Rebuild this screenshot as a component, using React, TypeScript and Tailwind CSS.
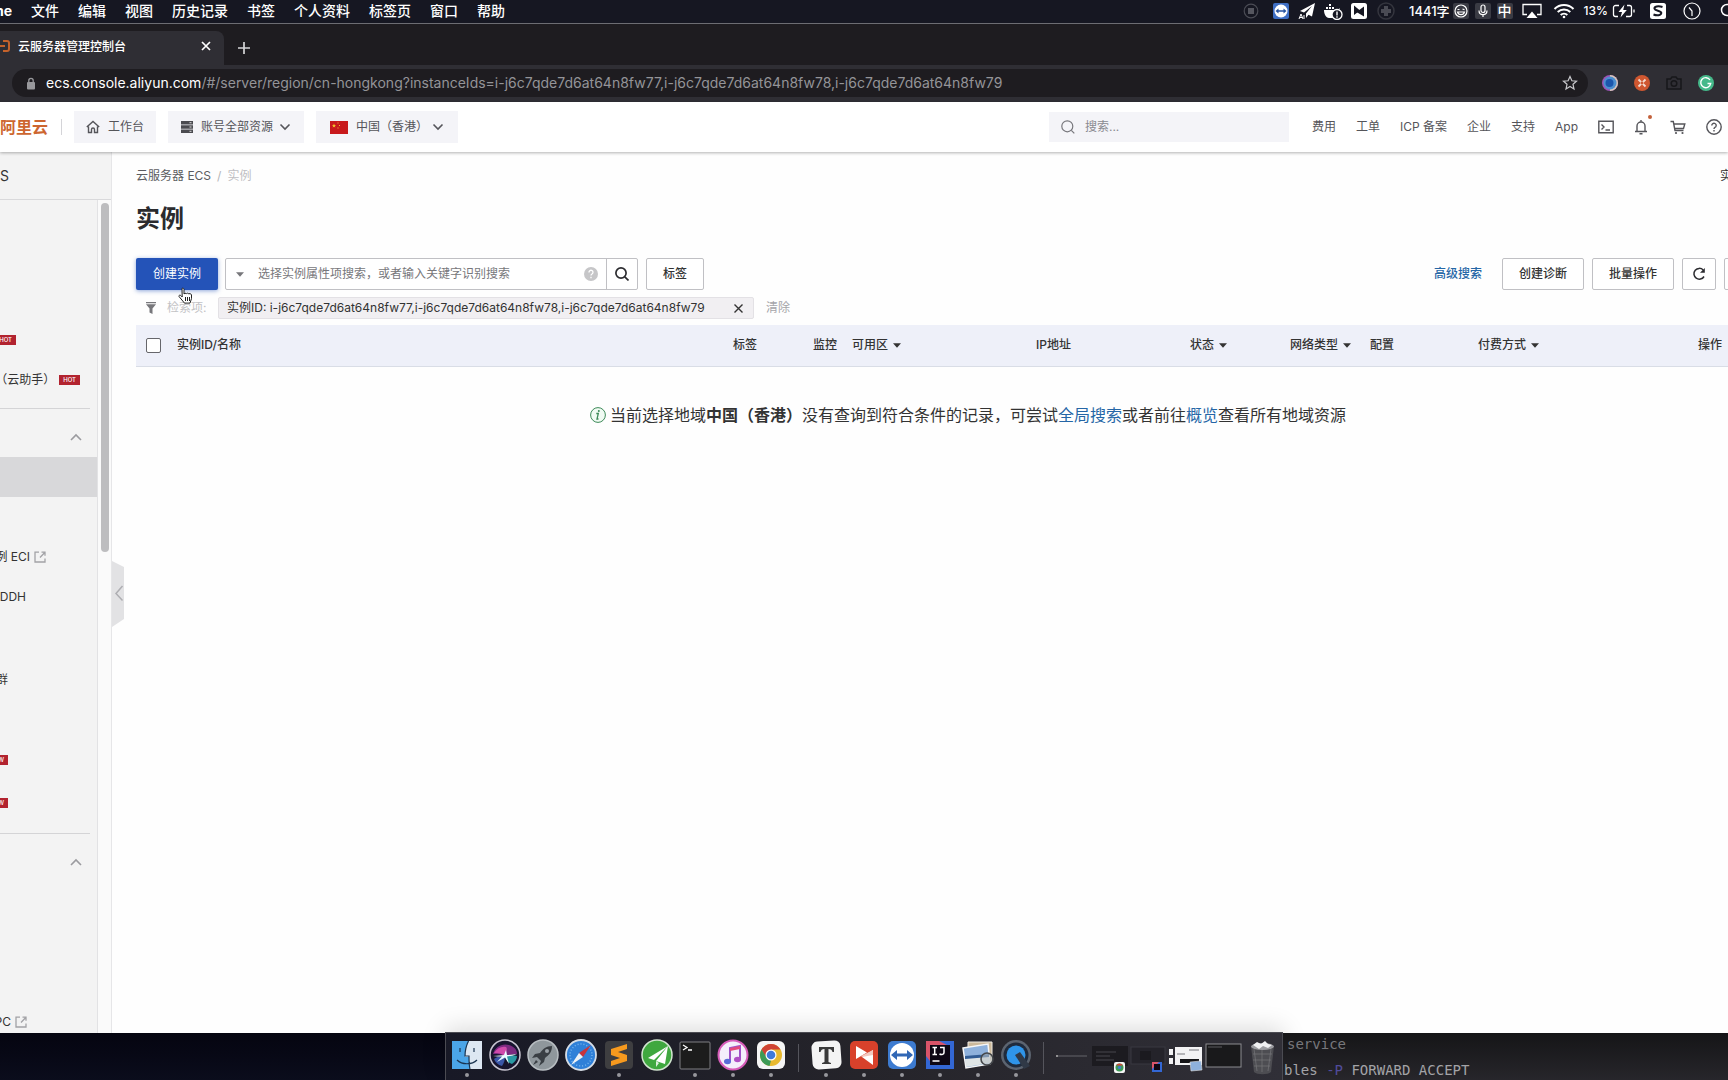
import type { ReactNode } from 'react';

const cjk = "font-['Inter','Noto_Sans_CJK_SC',sans-serif]";

const menus = ['文件', '编辑', '视图', '历史记录', '书签', '个人资料', '标签页', '窗口', '帮助'];

function Caret({ className = '' }: { className?: string }) {
  return (
    <svg viewBox="0 0 8 5" className={`h-[5px] w-2 ${className}`} fill="currentColor" aria-hidden="true">
      <path d="M0 .3h8L4 4.7z" />
    </svg>
  );
}

function Chevron({ up = false, className = '' }: { up?: boolean; className?: string }) {
  return (
    <svg viewBox="0 0 12 8" className={className} fill="none" stroke="currentColor" strokeWidth="1.6" aria-hidden="true">
      <path d={up ? 'M1 7l5-5 5 5' : 'M1.5 1.5l4.500 4.500 4.500-4.500'} />
    </svg>
  );
}

function Cell({ w, children }: { w: string; children: ReactNode }) {
  return <span className={`flex h-5 shrink-0 items-center justify-center ${w}`}>{children}</span>;
}

function MenuBar() {
  return (
    <div className="flex h-6 shrink-0 items-center overflow-hidden border-b border-[#6d6d73] bg-[#161722] pb-0.5 text-sm leading-5 font-medium text-white">
      <div className="flex w-3 justify-end overflow-hidden font-bold">me</div>
      <nav className="ml-[19px] flex gap-[19px]" aria-label="菜单栏">
        {menus.map((m) => (
          <button key={m} className="whitespace-nowrap">{m}</button>
        ))}
      </nav>
      <div className="ml-auto flex items-center">
        <Cell w="w-7">
          <svg viewBox="0 0 16 16" className="size-4" aria-hidden="true">
            <circle cx="8" cy="8" r="6.800" fill="none" stroke="#4b4c55" strokeWidth="1.2" />
            <rect x="5" y="5" width="6" height="6" fill="#55565f" />
          </svg>
        </Cell>
        <Cell w="w-8">
          <svg viewBox="0 0 16 16" className="size-4" aria-hidden="true">
            <rect width="16" height="16" rx="2" fill="#3f6fc4" />
            <circle cx="8" cy="8" r="6.500" fill="#fff" />
            <path d="M2.500 8l3-2.500v1.700h5V5.500l3 2.500-3 2.500V8.800h-5v1.700z" fill="#26529f" />
          </svg>
        </Cell>
        <Cell w="w-5">
          <svg viewBox="0 0 18 18" className="size-[18px]" fill="#fff" aria-hidden="true">
            <path d="M17 1L2 9l4 1.500L14 4 8 11.500v4.500l2.500-3.200L14 14.500z" />
            <path d="M1 17l2-5 2 5M1.700 15.500h2.600M6 17v-4" fill="none" stroke="#fff" />
          </svg>
        </Cell>
        <Cell w="w-8">
          <svg viewBox="0 0 20 18" className="h-[18px] w-5" fill="#fff" aria-hidden="true">
            <path d="M1 8h13c1 0 2-2 3-1.500-1 2-2 2-3 2.500l-3 2-1 5H6C3 16 1 12 1 8z" />
            <path d="M3 5h2v2H3zM6 5h2v2H6zM6 2h2v2H6zM9 5h2v2H9z" />
            <circle cx="14" cy="12.500" r="5" fill="#161722" stroke="#fff" strokeWidth="1.300" />
            <path d="M13.300 9.500h1.400v4h-1.400zM13.300 14.300h1.400v1.400h-1.400z" />
          </svg>
        </Cell>
        <Cell w="w-5">
          <svg viewBox="0 0 16 16" className="size-4" aria-hidden="true">
            <rect width="16" height="16" rx="2.500" fill="#fff" />
            <path d="M3 2.500l6 5-6 4.500zM13 3.500v10L5.500 9z" fill="#161722" />
          </svg>
        </Cell>
        <Cell w="w-[34px]">
          <svg viewBox="0 0 18 18" className="size-[18px]" aria-hidden="true">
            <circle cx="9" cy="9" r="8" fill="none" stroke="#34353e" strokeWidth="1.500" />
            <path d="M7 4h4v3h3v4h-3v3H7v-3H4V7h3z" fill="#4a4b54" />
          </svg>
        </Cell>
        <span className="ml-1.5 text-[13px]">1441字</span>
        <Cell w="w-[22px]">
          <svg viewBox="0 0 16 16" className="size-4" fill="none" stroke="#fff" strokeWidth="1.200" aria-hidden="true">
            <rect width="16" height="16" rx="2" fill="#3a3b44" stroke="none" />
            <circle cx="8" cy="8" r="6" />
            <path d="M4.500 9c1 3.500 6 3.500 7 0zM4.500 6.500h2M9.500 6l2 .8" />
          </svg>
        </Cell>
        <Cell w="w-[22px]">
          <svg viewBox="0 0 16 16" className="size-4" fill="none" stroke="#fff" strokeWidth="1.200" aria-hidden="true">
            <rect width="16" height="16" rx="2" fill="#3a3b44" stroke="none" />
            <rect x="6" y="2" width="4" height="7.500" rx="2" />
            <path d="M4 7.500c0 5.500 8 5.500 8 0M8 11.500V14" />
          </svg>
        </Cell>
        <Cell w="w-[22px]">
          <span className="flex size-4 items-center justify-center rounded-xs bg-[#3a3b44] text-sm">中</span>
        </Cell>
        <Cell w="w-8">
          <svg viewBox="0 0 20 16" className="h-4 w-5" aria-hidden="true">
            <path d="M5 11.500H1V1.500h18v10h-4" fill="none" stroke="#fff" strokeWidth="1.300" />
            <path d="M10 8.500l5.500 6.500h-11z" fill="#fff" />
          </svg>
        </Cell>
        <Cell w="w-8">
          <svg viewBox="0 0 22 16" className="h-4 w-[22px]" fill="none" stroke="#fff" strokeWidth="2" aria-hidden="true">
            <path d="M1.500 6a13.400 13.400 0 0119 0M4.700 9a9 9 0 0112.600 0M7.700 12a4.700 4.700 0 016.600 0" />
            <circle cx="11" cy="14" r="1.300" fill="#fff" stroke="none" />
          </svg>
        </Cell>
        <span className="ml-1 text-xs">13%</span>
        <Cell w="w-8">
          <svg viewBox="0 0 24 14" className="h-3.5 w-6" fill="none" stroke="#fff" strokeWidth="1.300" aria-hidden="true">
            <path d="M7 1.500H3.500A2 2 0 001.500 3.500v7a2 2 0 002 2H6M15 1.500h2.500a2 2 0 012 2v7a2 2 0 01-2 2H14M22 5.500v3" />
            <path d="M12.500.5L6.500 8h3.500l-1.500 5.500L14.800 6h-3.600z" fill="#fff" stroke="none" />
          </svg>
        </Cell>
        <Cell w="w-9">
          <svg viewBox="0 0 16 16" className="size-4" aria-hidden="true">
            <rect width="16" height="16" rx="2.500" fill="#fff" />
            <path d="M12.500 4C8 2.500 4 3.500 4.500 5.800 5 8 11.500 7.500 11.300 10c-.2 2.500-4.500 2.800-7.800 1.500" fill="none" stroke="#161722" strokeWidth="2" />
          </svg>
        </Cell>
        <Cell w="w-8">
          <svg viewBox="0 0 18 18" className="size-[18px]" fill="none" stroke="#fff" strokeWidth="1.200" aria-hidden="true">
            <circle cx="9" cy="9" r="8" />
            <path d="M9 14V9L6 5.500" />
          </svg>
        </Cell>
        <span className="ml-3 h-5 w-2 overflow-hidden">
          <svg viewBox="0 0 16 20" className="h-5 w-4" fill="none" stroke="#fff" strokeWidth="1.500" aria-hidden="true">
            <circle cx="7" cy="9" r="5.500" />
          </svg>
        </span>
      </div>
    </div>
  );
}

function Browser() {
  return (
    <div className="shrink-0 bg-[#2f2e34]">
      <div className="flex h-[41px] items-end bg-[#1e1c20] text-white">
        <div className="flex h-[34px] w-56 items-center rounded-tr-lg bg-[#2f2e34] pb-1 text-xs font-medium">
          <svg viewBox="0 0 10 14" className="h-3.5 w-2.5 shrink-0" fill="none" stroke="#c4622b" strokeWidth="2" aria-hidden="true">
            <path d="M0 7h5M3 2h4a2 2 0 012 2v6a2 2 0 01-2 2H3" />
          </svg>
          <span className="ml-2 pt-px">云服务器管理控制台</span>
          <button aria-label="关闭标签页" className="mr-3 ml-auto flex size-3 items-center justify-center">
            <svg viewBox="0 0 10 10" className="size-2.5" stroke="#fff" strokeWidth="1.700" aria-hidden="true"><path d="M1 1l8 8M9 1L1 9" /></svg>
          </button>
        </div>
        <button aria-label="新标签页" className="mb-[11px] ml-3.5 flex size-3">
          <svg viewBox="0 0 12 12" className="size-3" stroke="#d5d5d8" strokeWidth="1.700" aria-hidden="true"><path d="M6 0v12M0 6h12" /></svg>
        </button>
      </div>
      <div className="flex h-[37px] items-center pr-3.5 pb-px pl-3">
        <div className="flex h-7 min-w-0 flex-1 items-center rounded-full bg-[#1e1c20] pr-2.5 pl-3.5">
          <svg viewBox="0 0 10 13" className="h-[13px] w-2.5 shrink-0" aria-hidden="true">
            <rect x="1" y="5" width="8" height="7.500" rx="1" fill="#98989c" />
            <path d="M2.800 5V3.500a2.200 2.200 0 014.400 0V5" fill="none" stroke="#98989c" strokeWidth="1.300" />
          </svg>
          <div role="textbox" aria-label="地址" tabIndex={0} className="ml-2.5 min-w-0 flex-1 truncate text-sm leading-5 text-[#949498]">
            <span className="text-white">ecs.console.aliyun.com</span>/#/server/region/cn-hongkong?instanceIds=i-j6c7qde7d6at64n8fw77,i-j6c7qde7d6at64n8fw78,i-j6c7qde7d6at64n8fw79
          </div>
          <button aria-label="加入书签">
            <svg viewBox="0 0 16 16" className="size-4" fill="none" stroke="#c9c9cc" strokeWidth="1.200" aria-hidden="true">
              <path d="M8 1.500l1.900 4.300 4.600.4-3.500 3.100 1 4.600L8 11.500l-4 2.400 1-4.600L1.500 6.200l4.600-.4z" />
            </svg>
          </button>
        </div>
        <div className="ml-3.5 flex items-center gap-4">
          <svg viewBox="0 0 16 16" className="size-4" aria-hidden="true">
            <circle cx="8" cy="8" r="8" fill="#9c55b5" /><path d="M8 0a8 8 0 010 16z" fill="#d6c6b8" /><circle cx="8" cy="8" r="6.500" fill="#4c8fd0" /><circle cx="7.500" cy="8" r="4" fill="#1b56ac" />
          </svg>
          <svg viewBox="0 0 16 16" className="size-4" aria-hidden="true">
            <circle cx="8" cy="8" r="8" fill="#cf5730" /><path d="M4.500 4.500l7 7M11.500 4.500l-7 7" stroke="#f4dcd0" strokeWidth="1.800" fill="none" /><circle cx="8" cy="8" r="1.400" fill="#cf5730" />
          </svg>
          <svg viewBox="0 0 16 14" className="h-3.5 w-4" fill="none" stroke="#17171a" strokeWidth="1.500" aria-hidden="true">
            <path d="M1 3h3.500L6 1h4l1.500 2H15v10H1z" /><circle cx="8" cy="7.500" r="2.800" />
          </svg>
          <svg viewBox="0 0 16 16" className="size-4" aria-hidden="true">
            <circle cx="8" cy="8" r="8" fill="#45b98a" /><path d="M12 5a5 5 0 10.700 3.500H9.500" fill="none" stroke="#fff" strokeWidth="1.400" />
          </svg>
        </div>
      </div>
    </div>
  );
}

function Header() {
  return (
    <header className="relative z-10 flex h-[50px] shrink-0 items-center bg-white pr-1.5 text-xs whitespace-nowrap text-[#55555a] shadow-[0_1px_3px_rgba(0,0,0,0.3)]">
      <a href="#home" className="w-12 text-base leading-6 font-bold text-[#cd6630]">阿里云</a>
      <span className="ml-[13px] h-4 w-px bg-[#d4d4d8]" />
      <button className="ml-3 flex h-8 items-center gap-2 bg-[#f4f4f8] px-3">
        <svg viewBox="0 0 14 14" className="size-3.5" fill="none" stroke="#55555a" strokeWidth="1.400" aria-hidden="true">
          <path d="M.8 7L7 1.500 13.200 7M2.500 6.500v6h3V9.500a1.500 1.500 0 013 0v3h3v-6" />
        </svg>
        工作台
      </button>
      <button className="ml-3 flex h-8 items-center gap-2 bg-[#f4f4f8] px-[13px]">
        <svg viewBox="0 0 12 14" className="h-3.5 w-3" aria-hidden="true">
          <path d="M0 1h12v3.500H0zM0 5.300h12v3.500H0zM0 9.600h12v3.500H0z" fill="#4b4b50" />
          <path d="M8.500 2.700h2M8.500 7h2M8.500 11.300h2" stroke="#fff" strokeWidth=".8" />
        </svg>
        <span>账号全部资源</span>
        <Chevron className="-ml-0.5 h-2 w-3" />
      </button>
      <button className="ml-3 flex h-8 items-center gap-2 bg-[#f4f4f8] px-3.5">
        <svg viewBox="0 0 18 13" className="h-[13px] w-[18px]" aria-hidden="true">
          <rect width="18" height="13" fill="#c8191c" /><path d="M4 2.500l.6 1.400H6L4.900 5l.4 1.500L4 5.700l-1.300.8L3.100 5 2 3.900h1.400zM7.500 1.500h1v1h-1zM9 4h1v1H9zM7.500 6.500h1v1h-1z" fill="#f0c02c" />
        </svg>
        <span>中国（香港）</span>
        <Chevron className="-ml-1 h-2 w-3" />
      </button>
      <label className="ml-auto flex h-[30px] w-60 items-center gap-2.5 bg-[#f4f4f8] px-3">
        <svg viewBox="0 0 14 14" className="size-3.5 shrink-0" fill="none" stroke="#77777c" strokeWidth="1.200" aria-hidden="true"><circle cx="6.300" cy="6.300" r="5.500" /><path d="M10.300 10.300l3 3" /></svg>
        <input aria-label="搜索" placeholder="搜索..." className="w-full min-w-0 bg-transparent outline-none placeholder:text-[#8a8a90]" />
      </label>
      <nav className="ml-[23px] flex items-center gap-5" aria-label="顶部导航">
        {['费用', '工单', 'ICP 备案', '企业', '支持', 'App'].map((t) => (
          <a key={t} href="#nav">{t}</a>
        ))}
        <button aria-label="终端">
          <svg viewBox="0 0 16 14" className="h-3.5 w-4" fill="none" stroke="#55555a" strokeWidth="1.400" aria-hidden="true"><path d="M.8 1.200h14.400v11.600H.8zM3.500 4.500L6 7 3.500 9.500M7.500 10H12" /></svg>
        </button>
        <button aria-label="通知" className="relative">
          <svg viewBox="0 0 14 16" className="h-4 w-3.5" fill="none" stroke="#55555a" strokeWidth="1.400" aria-hidden="true"><path d="M3 12V7a4 4 0 018 0v5M1 12.500h12M5.500 14.800h3M7 1v2" /></svg>
          <span className="absolute -top-1 -right-1 size-1 rounded-full bg-[#c3613a]" />
        </button>
        <button aria-label="购物车" className="ml-0.5">
          <svg viewBox="0 0 16 15" className="h-[15px] w-4" fill="none" stroke="#55555a" strokeWidth="1.400" aria-hidden="true"><path d="M.5 1.500h2.800L5 10.500h8.500M3.800 4h11l-1.300 4.500H4.500" /><circle cx="6" cy="13" r="1.100" fill="#55555a" stroke="none" /><circle cx="12.500" cy="13" r="1.100" fill="#55555a" stroke="none" /></svg>
        </button>
        <button aria-label="帮助">
          <svg viewBox="0 0 16 16" className="size-4" fill="none" stroke="#55555a" strokeWidth="1.400" aria-hidden="true"><circle cx="8" cy="8" r="7.200" /><path d="M5.800 6.500a2.200 2.200 0 114 1.200C9 8.500 8 8.600 8 10M8 11v1.500" /></svg>
        </button>
      </nav>
    </header>
  );
}

function Badge({ text }: { text: string }) {
  return <span className="flex h-2.5 items-center bg-[#b2232f] px-1 text-[6px] leading-none font-medium text-white">{text}</span>;
}

function ExternalIcon() {
  return (
    <svg viewBox="0 0 12 12" className="size-3 shrink-0" fill="none" stroke="#a2a2a6" strokeWidth="1.300" aria-hidden="true">
      <path d="M5 1.200H1v9.800h10V7.500M7.500 1.200H11v3.500M11 1.200L6 6.500" />
    </svg>
  );
}

function SideRow({ w, children }: { w: string; children: ReactNode }) {
  return <li className={`flex h-10 shrink-0 items-center justify-end whitespace-nowrap ${w}`}>{children}</li>;
}

function Sidebar() {
  return (
    <aside className="flex w-28 shrink-0 flex-col overflow-hidden border-r border-[#e6e6e8] bg-[#f3f3f3] text-xs text-[#333]">
      <div className="flex h-12 shrink-0 items-center border-b border-[#d9d9db] text-sm">S</div>
      <div className="flex min-h-0 flex-1 basis-0">
        <ul className="flex min-w-0 flex-1 flex-col overflow-hidden border-r border-[#e2e2e4] pt-[120px]">
          <SideRow w="w-4"><Badge text="HOT" /></SideRow>
          <SideRow w="w-20 gap-1"><a href="#assistant">（云助手）</a><Badge text="HOT" /></SideRow>
          <li className="mt-2 mr-[7px] shrink-0 border-t border-[#d4d4d6] pt-2">
            <button aria-label="收起" className="ml-auto flex h-10 w-5 items-center"><Chevron up className="h-2 w-3 text-[#9b9b9f]" /></button>
          </li>
          <li className="h-10 shrink-0 bg-[#d8d8da]" />
          <li className="h-10 shrink-0" />
          <SideRow w="w-[46px] gap-1"><a href="#eci">例 ECI</a><ExternalIcon /></SideRow>
          <SideRow w="w-[26px]"><a href="#ddh">DDH</a></SideRow>
          <li className="h-[43px] shrink-0" />
          <SideRow w="w-2"><a href="#cluster">群</a></SideRow>
          <li className="h-10 shrink-0" />
          <SideRow w="w-2"><Badge text="NEW" /></SideRow>
          <li className="h-[3px] shrink-0" />
          <SideRow w="w-2"><Badge text="NEW" /></SideRow>
          <li className="mt-2.5 mr-[7px] shrink-0 border-t border-[#d4d4d6] pt-2">
            <button aria-label="收起" className="ml-auto flex h-10 w-5 items-center"><Chevron up className="h-2 w-3 text-[#9b9b9f]" /></button>
          </li>
          <li className="h-[120px] shrink-0" />
          <SideRow w="w-[27px] gap-1"><a href="#vpc">PC</a><ExternalIcon /></SideRow>
        </ul>
        <div className="w-[13px] bg-[#fafafa] pt-[3px] pl-[3px]">
          <div className="h-[42%] w-2 rounded-full bg-[#bdbdbf]" />
        </div>
      </div>
    </aside>
  );
}

const outline = 'flex h-8 items-center justify-center rounded-xs border border-[#c0c0c4] bg-white text-xs font-medium text-[#333] whitespace-nowrap';

const columns = [
  { label: '标签', w: 'w-20' },
  { label: '监控', w: 'w-[39px]' },
  { label: '可用区', w: 'w-[184px]', sort: true },
  { label: 'IP地址', w: 'w-[154px]' },
  { label: '状态', w: 'w-[100px]', sort: true },
  { label: '网络类型', w: 'w-20', sort: true },
  { label: '配置', w: 'w-[108px]' },
  { label: '付费方式', w: 'w-[220px]', sort: true },
  { label: '操作', w: 'w-[110px]' },
];

function Main() {
  return (
    <main className="relative min-w-0 flex-1 overflow-hidden bg-[#fefefe] pl-6 text-xs text-[#333]">
      <button aria-label="收起侧栏" className="absolute top-1/2 left-0 h-[66px] w-3 -translate-y-8">
        <svg viewBox="0 0 12 66" className="h-[66px] w-3" aria-hidden="true">
          <path d="M0 0l12 6v52L0 66z" fill="#e2e2e4" /><path d="M10.500 25L4 32.500l6.500 7" fill="none" stroke="#aeaeb2" strokeWidth="1.500" />
        </svg>
      </button>
      <div className="-mr-[72px] flex flex-col">
        <div className="flex h-12 items-center pr-[32px]">
          <nav aria-label="面包屑" className="flex gap-1.5 text-[#5c5c60]">
            <a href="#ecs">云服务器 ECS</a>
            <span className="text-[#b5b5b8]">/</span>
            <span className="text-[#bfbfc3]">实例</span>
          </nav>
          <a href="#guide" className="ml-auto">实例教程</a>
        </div>
        <h1 className="mt-[3px] text-2xl leading-8 font-bold text-[#2b2b2e]">实例</h1>
        <div className="mt-[23px] flex items-center gap-2">
          <button className="-mr-px flex h-8 w-[82px] items-center justify-center rounded-xs bg-[#2453b8] text-xs text-white shadow-[0_1px_4px_rgba(36,83,184,0.5)]">创建实例</button>
          <div className="flex h-8 w-[413px] items-center rounded-xs border border-[#c0c0c4] bg-white">
            <button aria-label="选择属性" className="ml-2.5 flex text-[#77777b]"><Caret /></button>
            <input aria-label="搜索实例" placeholder="选择实例属性项搜索，或者输入关键字识别搜索" className="ml-3.5 min-w-0 flex-1 outline-none placeholder:text-[#77777b]" />
            <svg viewBox="0 0 14 14" className="mr-2 size-3.5" aria-hidden="true">
              <circle cx="7" cy="7" r="7" fill="#c6c6c8" /><path d="M5 5.500a2 2 0 113.300 1.300C7.500 7.300 7 7.600 7 8.500M7 9.700v1.500" fill="none" stroke="#fff" strokeWidth="1.300" />
            </svg>
            <button aria-label="搜索" className="flex h-full w-[31px] items-center justify-center border-l border-[#c0c0c4]">
              <svg viewBox="0 0 14 14" className="size-3.5" fill="none" stroke="#2c2c30" strokeWidth="1.700" aria-hidden="true"><circle cx="6" cy="6" r="5.100" /><path d="M9.800 9.800l3.700 3.700" /></svg>
            </button>
          </div>
          <button className={`${outline} w-[58px]`}>标签</button>
          <a href="#advanced" className="mr-3 ml-auto font-medium text-[#2566a6]">高级搜索</a>
          <button className={`${outline} w-[82px]`}>创建诊断</button>
          <button className={`${outline} w-[82px]`}>批量操作</button>
          <button aria-label="刷新" className={`${outline} w-[34px]`}>
            <svg viewBox="0 0 14 14" className="size-3.5" fill="none" stroke="#2c2c30" strokeWidth="1.500" aria-hidden="true"><path d="M12 9.500A5.400 5.400 0 1111.200 3" /><path d="M12.800 1v4.800H8z" fill="#2c2c30" stroke="none" /></svg>
          </button>
          <button aria-label="导出" className={`${outline} w-[34px]`} />
          <button aria-label="设置" className={`${outline} w-[34px]`} />
        </div>
        <div className="mt-[7px] flex h-[22px] items-center pl-2.5">
          <svg viewBox="0 0 10 12" className="h-3 w-2.5" aria-hidden="true"><path d="M0 0h10v1.200H0zM0 2.200h10L6.500 6.500V12l-3-1.500v-4z" fill="#77777b" /></svg>
          <span className="ml-[11px] w-[51px] text-[#c2c2c5]">检索项:</span>
          <span className="flex h-full w-[536px] items-center justify-between rounded-xs border border-[#e3e1e5] bg-[#f1eff2] pr-2.5 pl-2 whitespace-nowrap">
            实例ID: i-j6c7qde7d6at64n8fw77,i-j6c7qde7d6at64n8fw78,i-j6c7qde7d6at64n8fw79
            <button aria-label="移除条件"><svg viewBox="0 0 9 9" className="size-[9px]" stroke="#333" strokeWidth="1.400" aria-hidden="true"><path d="M.5 .5l8 8M8.500 .5l-8 8" /></svg></button>
          </span>
          <button className="ml-3 text-[#a5a5a9]">清除</button>
        </div>
        <table className="mt-1.5 w-full table-fixed text-left">
          <thead>
            <tr className="h-[41px] border-b border-[#d9dde6] bg-[#eef0f9] whitespace-nowrap">
              <th className="w-[33px] pl-2.5"><input type="checkbox" aria-label="全选" className="block size-[15px] appearance-none rounded-xs border border-[#66666b] bg-white" /></th>
              <th className="px-2 font-medium">实例ID/名称</th>
              {columns.map((c) => (
                <th key={c.label} className={`pl-2 font-medium ${c.w}`}>
                  {c.sort ? <button className="flex items-center gap-[5px]">{c.label}<Caret /></button> : c.label}
                </th>
              ))}
            </tr>
          </thead>
          <tbody>
            <tr>
              <td colSpan={11} className="pt-9">
                <div className="flex items-center justify-center gap-1 text-base leading-6">
                  <svg viewBox="0 0 16 16" className="size-4" fill="none" stroke="#3d8a58" aria-hidden="true"><circle cx="8" cy="8" r="7.400" fill="#f0fbf3" /><path d="M6.300 6.500h2L7 12h1.500" strokeWidth="1.300" /><circle cx="8.800" cy="4" r="1" fill="#3d8a58" stroke="none" /></svg>
                  <p>当前选择地域<b className="font-bold">中国（香港）</b>没有查询到符合条件的记录，可尝试<a href="#search" className="text-[#2566a6]">全局搜索</a>或者前往<a href="#overview" className="text-[#2566a6]">概览</a>查看所有地域资源</p>
                </div>
              </td>
            </tr>
          </tbody>
        </table>
      </div>
      <svg viewBox="0 0 16 18" className="absolute top-[135px] left-[66px] h-[18px] w-4" aria-hidden="true">
        <path d="M4 1.500c1-.8 2 0 2 1V7l1-.8 1.500.4 1-.4 1.300.6 1.200-.2 1.500 1v4l-1.500 4.500H6.500L1 9.500c-.5-1.200 1-1.800 2-.8L4.200 10z" fill="#fff" stroke="#222" />
        <path d="M7.500 10v4M9.500 10v4M11.500 10v4" stroke="#222" />
      </svg>
    </main>
  );
}

function Svg({ children }: { children: ReactNode }) {
  return <svg viewBox="0 0 32 32" className="size-8" aria-hidden="true">{children}</svg>;
}

const apps: { name: string; running?: boolean; art: ReactNode }[] = [
  {
    name: '访达', running: true,
    art: <><rect x="1" y="2" width="30" height="28" fill="#dde7f2" /><path d="M1 2h17c-3 5-4 10-4 16h4c0 5 0 8 1 12H1z" fill="#4ba5e8" /><path d="M9 9v4M23 9v4M6 21c5 5 15 5 20 0M17.500 2c-2.500 5-3.500 10-3.500 15h4c0 5 0 9 1 13" fill="none" stroke="#1b3450" strokeWidth="1.200" /></>,
  },
  {
    name: 'Siri',
    art: <><circle cx="16" cy="16" r="15" fill="#17152f" stroke="#c9c6d2" strokeWidth="1.500" /><path d="M4 15C6 8 13 4 20 6c6 2 8 5 8 9-4 0-8 1-12 2-4-2-8-2-12-2z" fill="#7a2a80" /><path d="M5 14c3-5 8-7 12-6 2 2 0 5-1 9-4-3-7-3-11-3z" fill="#cf4bab" /><path d="M28 17c-5-1-9 0-12 0 1 4 3 7 7 8 3-2 5-5 5-8z" fill="#2a9aa4" /><path d="M5 20c4-3 8-3 11-3 0 4-1 7-3 10-4-1-7-4-8-7z" fill="#3a56a8" /><path d="M4 17c5 0 8-1 11-1l2-5 1 5c3 0 7-1 10-1-4 2-7 2-10 2.500L20 25l-4-6.500L8 23l5-5.500c-3 0-6 0-9-.5z" fill="#eafcff" /></>,
  },
  {
    name: '启动台',
    art: <><circle cx="16" cy="16" r="15" fill="#8f979c" stroke="#b9bfc3" strokeWidth="1.500" /><path d="M25 7c-6 0-9 3-12 7l-5 1-3 4 5-1 4 4-2 5 5-4 1-4c4-3 7-6 7-12z" fill="#3a3f44" /><circle cx="20" cy="12" r="2" fill="#9aa1a6" /><path d="M9 21l-3 5 5-3z" fill="#3a3f44" /></>,
  },
  {
    name: 'Safari',
    art: <><circle cx="16" cy="16" r="15" fill="#2f80d8" stroke="#d6dde5" strokeWidth="1.800" /><circle cx="16" cy="16" r="11" fill="none" stroke="#77b5ee" strokeWidth="1.500" strokeDasharray="1 2" /><path d="M26 6L18 18l-4-4z" fill="#c8343c" /><path d="M6 26l8-12 4 4z" fill="#eef2f6" /></>,
  },
  {
    name: 'Sublime Text', running: true,
    art: <><rect x="2" y="2" width="28" height="28" rx="4" fill="#3e3e40" /><path d="M8 10l16-5v5l-9 3 9 3v6L8 27v-5l9-3-9-3z" fill="#f79a1e" /></>,
  },
  {
    name: '纸飞机',
    art: <><circle cx="16" cy="16" r="15" fill="#3fa83f" stroke="#d2e5d0" strokeWidth="1.500" /><path d="M27 7L7 19l6 2zM27 7L15 22l9 3z" fill="#fff" /><path d="M15 22v6l3-4z" fill="#dcefdc" /></>,
  },
  {
    name: '终端', running: true,
    art: <><rect x="1" y="3" width="30" height="27" rx="1" fill="#1c1c1c" stroke="#7e7e82" /><path d="M4 6l4 2.500L4 11M9 11h4" fill="none" stroke="#fff" strokeWidth="1.300" /></>,
  },
  {
    name: '音乐', running: true,
    art: <><circle cx="16" cy="16" r="14.500" fill="#f4eefb" stroke="#d65bb9" strokeWidth="2" /><path d="M13 22V9l10-2v13" fill="none" stroke="#a052c8" strokeWidth="2" /><path d="M13 9l10-2v3l-10 2z" fill="#e3487c" /><ellipse cx="10.500" cy="22.500" rx="3.500" ry="2.800" fill="#596bd8" /><ellipse cx="20.500" cy="20.500" rx="3.500" ry="2.800" fill="#b04fc4" /></>,
  },
  {
    name: 'Chrome', running: true,
    art: <><rect x="2" y="2" width="28" height="28" rx="6" fill="#f5f5f5" /><circle cx="16" cy="16" r="11" fill="#e8b92f" /><path d="M6.500 10.500A11 11 0 0125.500 10.500H16L11.200 19z" fill="#cf4334" /><path d="M6.500 10.500L12 19l4 2.500L14.500 27A11 11 0 016.500 10.500z" fill="#3d9a56" /><circle cx="16" cy="16" r="5.500" fill="#fff" /><circle cx="16" cy="16" r="4.300" fill="#3e7ad9" /></>,
  },
];

const moreApps: typeof apps = [
  {
    name: 'Typora', running: true,
    art: <><rect x="2" y="2" width="29" height="28" rx="6" fill="#f4f4f4" transform="rotate(-4 16 16)" /><path d="M9 8h15v5h-1.500c-.5-2-1.500-3-4-3v13l2.500 1v1h-9v-1l2.500-1V10c-2.500 0-3.500 1-4 3H9z" fill="#3a3a3a" /></>,
  },
  {
    name: '录屏', running: true,
    art: <><rect x="2" y="2" width="28" height="28" rx="5" fill="#d8412b" /><path d="M8 7l11 6.500L8 20z" fill="#fff" /><path d="M25 11v15l-11-8z" fill="#fff" /><path d="M25 11v5l-11 2-1-1z" fill="#f3c9c0" /></>,
  },
  {
    name: 'TeamViewer', running: true,
    art: <><rect x="2" y="2" width="28" height="28" rx="5" fill="#3d7bd0" /><circle cx="16" cy="16" r="12" fill="#fff" /><path d="M5 16l6-5v3.500h10V11l6 5-6 5v-3.500H11V21z" fill="#3167b5" /></>,
  },
  {
    name: 'IntelliJ IDEA', running: true,
    art: <><rect x="2" y="2" width="28" height="28" fill="#3367d4" /><path d="M2 2h13l8 4L6 22l-4-5z" fill="#d95469" /><rect x="6" y="6" width="20" height="20" fill="#0d0714" /><path d="M8.500 8.500h4.500M10.700 8.500v7M8.500 15.500h4.500M16 8.500h4v5c0 2-2.500 2.500-4.500 1.500M8.500 22h7" fill="none" stroke="#fff" strokeWidth="1.500" /></>,
  },
  {
    name: '预览', running: true,
    art: <><path d="M6 3h24v20H6z" fill="#cbb89a" stroke="#f0ece4" /><path d="M1 9l25-4 2 20-24 4z" fill="#8eb1dc" stroke="#f6f6f6" strokeWidth="1.500" /><path d="M3 19l24-5 1 10-24 4z" fill="#dfe5e6" /><path d="M3 17l24-2v3L3 20z" fill="#315c94" /><circle cx="25" cy="20" r="6" fill="#b9bfc4" fillOpacity=".6" stroke="#44474b" strokeWidth="1.600" /></>,
  },
  {
    name: 'QuickTime Player', running: true,
    art: <><circle cx="16" cy="16" r="15" fill="#5c6470" /><circle cx="16" cy="16" r="12.500" fill="#1f2b3d" /><circle cx="16" cy="16" r="9.500" fill="#2f95ea" /><path d="M15 16l5-3 10 14-6 3z" fill="#303947" /></>,
  },
];

function DockApps({ list }: { list: typeof apps }) {
  return list.map((a) => (
    <button key={a.name} aria-label={a.name} className="flex w-[38px] flex-col items-center gap-0.5">
      <Svg>{a.art}</Svg>
      <span className={`size-1 rounded-full ${a.running ? 'bg-[#97979c]' : 'bg-transparent'}`} />
    </button>
  ));
}

function Dock() {
  return (
    <div className="relative z-10 flex h-[47px] shrink-0 justify-center bg-gradient-to-b from-[#050510] to-[#0b0d1c]">
      <div className="flex-[445] basis-0" />
      <div className="-mt-px flex h-12 shrink-0 items-center border-t border-r border-l border-[#4b4b52] bg-gradient-to-r from-[#181926] via-[#25242a] to-[#302f37] pt-0.5 pr-1.5 pl-0.5 shadow-[0_-4px_24px_rgba(0,0,0,0.14)]">
        <DockApps list={apps} />
        <span className="mr-2 ml-2 h-7 w-px bg-[#55555c]" />
        <DockApps list={moreApps} />
        <span className="ml-2 h-8 w-px bg-[#55555c]" />
        <svg viewBox="0 0 196 36" className="ml-2 h-9 w-[196px]" aria-hidden="true">
          <path d="M4 16h31" stroke="#64646a" /><circle cx="5" cy="16" r="1" fill="#aaa" />
          <rect x="40" y="6" width="36" height="20" fill="#1c1b20" /><path d="M44 12h20M44 16h14M44 20h18" stroke="#47464d" />
          <rect x="62" y="22" width="11" height="11" rx="2" fill="#f5f5f5" /><circle cx="67.500" cy="27.500" r="4" fill="#3d9a56" /><path d="M64 25.500a4 4 0 017 0z" fill="#cf4334" /><circle cx="67.500" cy="27.500" r="1.600" fill="#3e7ad9" />
          <rect x="79" y="7" width="34" height="17" fill="#24232a" stroke="#393840" /><rect x="88" y="11" width="11" height="9" fill="#1b1a1f" />
          <rect x="100" y="22" width="10" height="10" fill="#3367d4" /><path d="M100 22h7l-7 7z" fill="#d95469" /><rect x="102" y="24" width="6" height="6" fill="#0d0714" />
          <path d="M117 9h4v6h-4zM117 18h4v6h-4zM123 7h27v18h-27z" fill="#f2f2f4" /><path d="M128 19h19v4h-19z" fill="#151518" /><path d="M137 10h10M125 14h8" stroke="#77777c" /><path d="M138 22l11-1 1 9-11 1z" fill="#8eb1dc" stroke="#ddd" strokeWidth=".6" />
          <rect x="154" y="4" width="35" height="23" fill="#19191b" stroke="#8b8b90" /><path d="M156 7h14" stroke="#5a5a5e" />
        </svg>
        <svg viewBox="0 0 28 36" className="h-9 w-7" aria-hidden="true">
          <path d="M3 6h23l-3 26c-3 3-14 3-17 0z" fill="#4d4d52" /><path d="M6 9l3 22M14 10v22M23 9l-3 22M5 14h19M5 20h18M6 26h16" stroke="#75757a" strokeWidth=".7" /><ellipse cx="14.500" cy="6.500" rx="11.500" ry="3.500" fill="#9b9ba0" /><path d="M5 5l4-3 4 2 4-3 3 3 4 1-4 3-5-2-4 3z" fill="#f0f0f2" />
        </svg>
      </div>
      <div className="flex flex-[445] basis-0 flex-col overflow-hidden bg-gradient-to-b from-[#151517] to-[#27262b] pt-px font-['DejaVu_Sans_Mono',monospace] text-sm whitespace-pre">
        <div className="h-[26px] pl-1 leading-5 text-[#77777b]">service</div>
        <div className="pl-px leading-5 text-[#a3a3a7]">bles <span className="text-[#514c9b]">-P</span> FORWARD ACCEPT</div>
      </div>
    </div>
  );
}

export default function App() {
  return (
    <div className={`flex min-h-screen flex-col overflow-hidden bg-white ${cjk}`}>
      <MenuBar />
      <Browser />
      <Header />
      <div className="flex min-h-0 flex-1">
        <Sidebar />
        <Main />
      </div>
      <Dock />
    </div>
  );
}
